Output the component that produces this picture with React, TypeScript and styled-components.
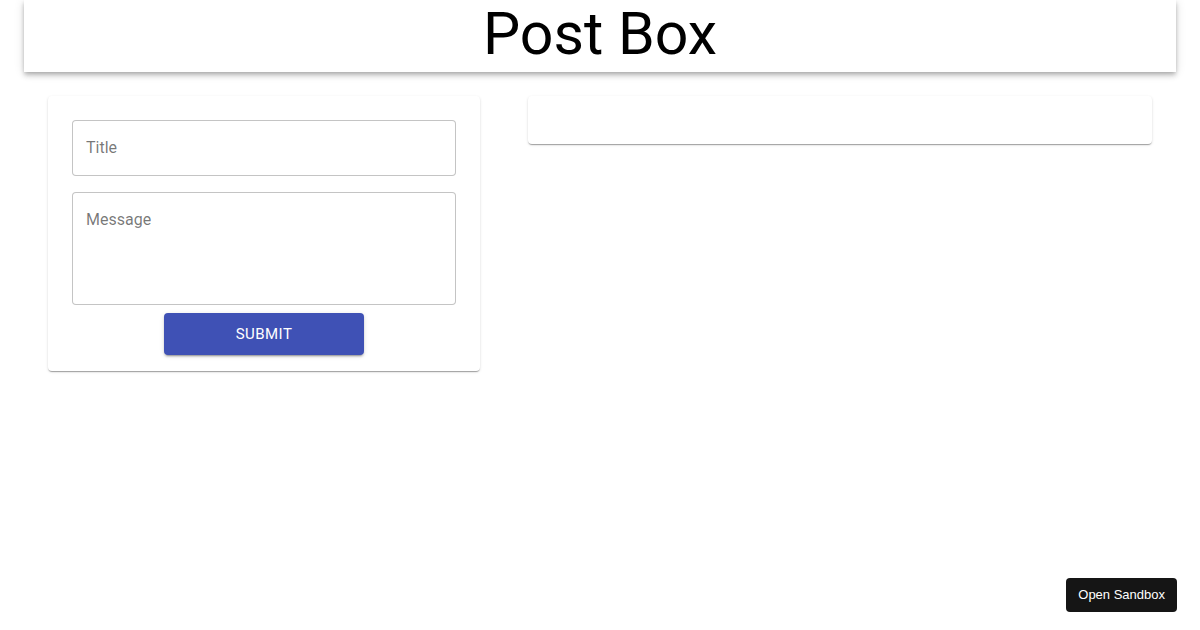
import styled, { createGlobalStyle } from 'styled-components';

const GlobalStyle = createGlobalStyle`
  body {
    margin: 0;
    background: #fff;
    font-family: Roboto, "Liberation Sans", sans-serif;
  }
  * { box-sizing: border-box; }
`;

const Page = styled.div`
  padding: 0 24px;
`;

const Header = styled.header`
  height: 72px;
  padding-bottom: 4px;
  background: #fff;
  display: flex;
  align-items: center;
  justify-content: center;
  box-shadow: 0px 2px 4px -1px rgba(0, 0, 0, 0.2), 0px 4px 5px 0px rgba(0, 0, 0, 0.14),
    0px 1px 10px 0px rgba(0, 0, 0, 0.12);
`;

const Heading = styled.h1`
  margin: 0;
  font-size: 59px;
  font-weight: 400;
  line-height: 68px;
  color: #000;
`;

const Grid = styled.main`
  display: grid;
  grid-template-columns: 5fr 7fr;
  align-items: start;
`;

const Cell = styled.section`
  padding: 24px;
`;

const Paper = styled.div<{ $compact?: boolean }>`
  background: #fff;
  border-radius: 4px;
  box-shadow: 0px 2px 1px -1px rgba(0, 0, 0, 0.2), 0px 1px 1px 0px rgba(0, 0, 0, 0.14),
    0px 1px 3px 0px rgba(0, 0, 0, 0.12);
  padding: ${(p) => (p.$compact ? '24px' : '24px 24px 16px')};
  min-height: 48px;
`;

const Form = styled.form`
  display: flex;
  flex-direction: column;
  gap: 16px;
`;

const Field = styled.input`
  height: 56px;
  width: 100%;
  border: 1px solid rgba(0, 0, 0, 0.23);
  border-radius: 4px;
  padding: 0 13px 2px;
  font-family: Roboto, sans-serif;
  font-size: 16px;
  color: rgba(0, 0, 0, 0.87);
  outline: none;
  &::placeholder { color: rgba(0, 0, 0, 0.54); }
`;

const Area = styled.textarea`
  height: 113px;
  width: 100%;
  border: 1px solid rgba(0, 0, 0, 0.23);
  border-radius: 4px;
  padding: 15px 13px;
  font-family: Roboto, sans-serif;
  font-size: 16px;
  line-height: 23px;
  resize: none;
  outline: none;
  &::placeholder { color: rgba(0, 0, 0, 0.54); }
`;

const Actions = styled.div`
  display: flex;
  justify-content: center;
  margin-top: -8px;
`;

const Submit = styled.button`
  width: 200px;
  height: 42px;
  border: none;
  border-radius: 4px;
  background: #3f51b5;
  color: #fff;
  font-family: Roboto, sans-serif;
  font-size: 15px;
  font-weight: 400;
  letter-spacing: 0.46px;
  text-transform: uppercase;
  cursor: pointer;
  box-shadow: 0px 3px 1px -2px rgba(0, 0, 0, 0.2), 0px 2px 2px 0px rgba(0, 0, 0, 0.14),
    0px 1px 5px 0px rgba(0, 0, 0, 0.12);
`;

const SandboxLink = styled.a`
  position: fixed;
  right: 23px;
  bottom: 18px;
  height: 34px;
  padding: 0 12px 1px;
  display: flex;
  align-items: center;
  background: #151515;
  color: #fff;
  border-radius: 4px;
  font-family: "Liberation Sans", Arial, sans-serif;
  font-size: 13px;
  text-decoration: none;
`;

export default function App() {
  return (
    <>
      <GlobalStyle />
      <Page>
        <Header>
          <Heading>Post Box</Heading>
        </Header>
        <Grid>
          <Cell>
            <Paper>
              <Form onSubmit={(e) => e.preventDefault()}>
                <Field placeholder="Title" />
                <Area placeholder="Message" />
                <Actions>
                  <Submit type="submit">Submit</Submit>
                </Actions>
              </Form>
            </Paper>
          </Cell>
          <Cell>
            <Paper $compact />
          </Cell>
        </Grid>
      </Page>
      <SandboxLink href="#">Open Sandbox</SandboxLink>
    </>
  );
}
